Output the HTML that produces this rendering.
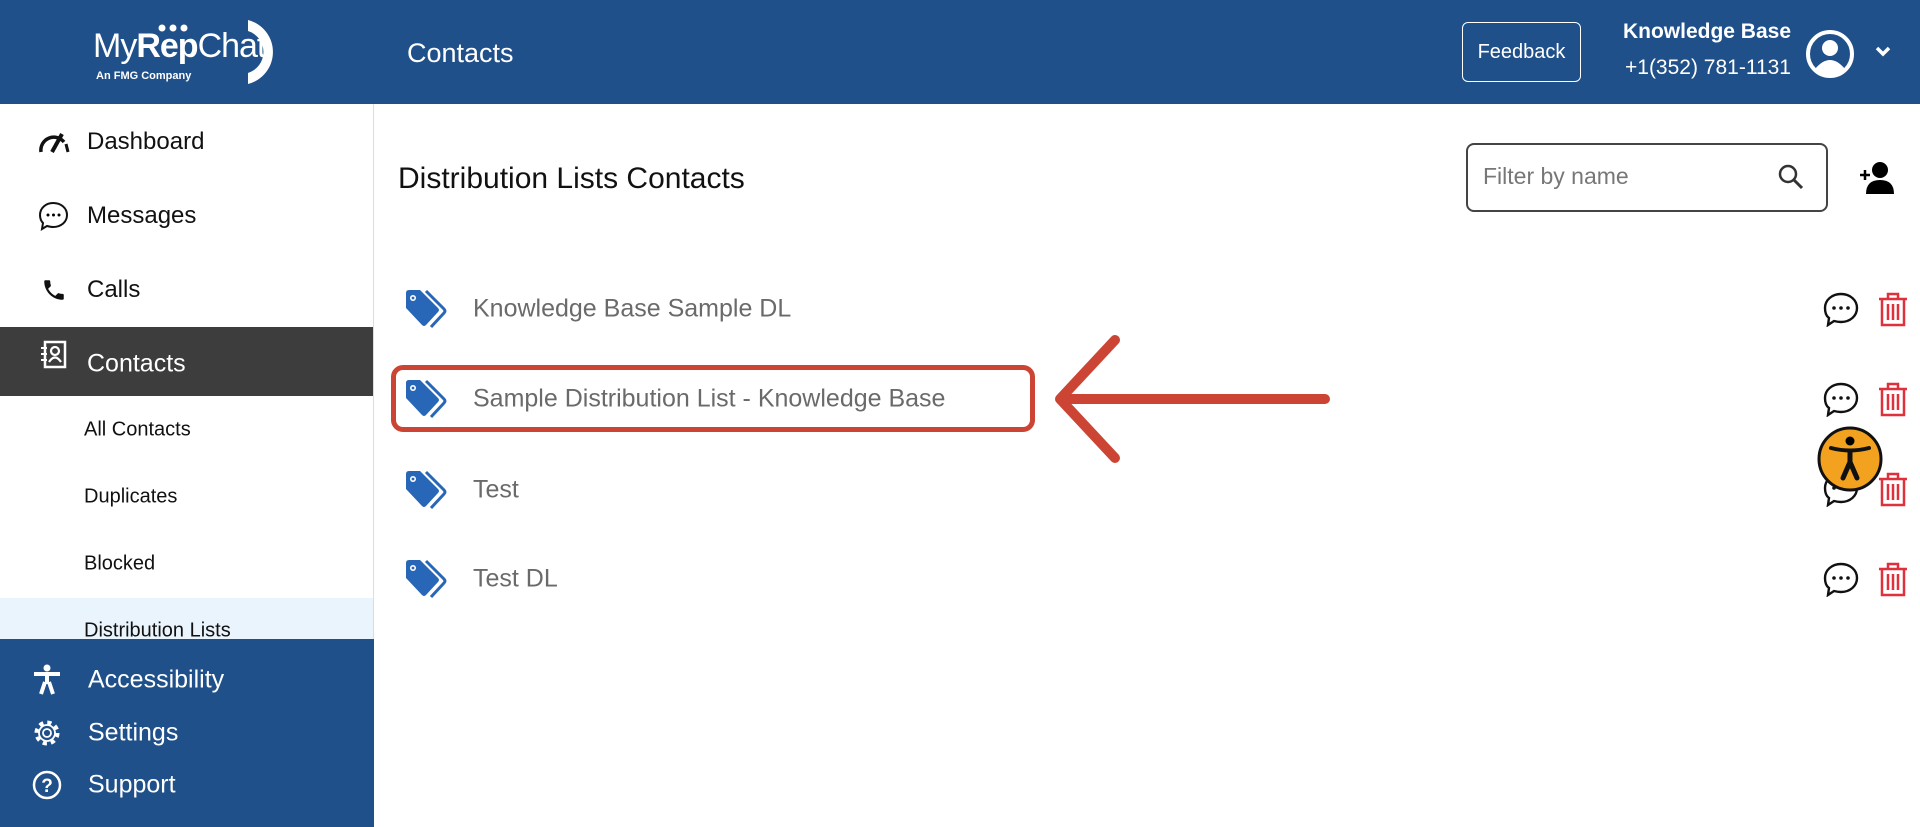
<!DOCTYPE html>
<html><head><meta charset="utf-8"><style>
*{margin:0;padding:0;box-sizing:border-box}
body{width:1920px;height:827px;position:relative;overflow:hidden;background:#fff;font-family:"Liberation Sans",sans-serif;color:#000}
.abs{position:absolute}
.hdr{left:0;top:0;width:1920px;height:104px;background:#20508a}
.side{left:0;top:104px;width:374px;height:723px;background:#fff;border-right:1px solid #ddd}
.nav{position:absolute;left:87px;font-size:24px;color:#111;transform:translateY(-50%)}
.sub{position:absolute;left:84px;font-size:20px;color:#111;transform:translateY(-50%)}
.bnav{position:absolute;left:88px;font-size:25px;color:#fff;transform:translateY(-50%)}
.row{position:absolute;left:473px;font-size:25px;color:#6a6a6a;transform:translateY(-50%)}
</style></head><body>
<div class="abs hdr"></div>
<div class="abs" style="left:93px;top:27px;color:#fff;font-size:34px;letter-spacing:-1px">My<b>Rep</b>Chat</div>
<div class="abs" style="left:96px;top:70px;color:#fff;font-size:11px;font-weight:bold">An FMG Company</div>
<svg class="abs" style="left:155px;top:20px" width="130" height="68"><circle cx="7" cy="8" r="3.5" fill="#fff"/><circle cx="18" cy="8" r="3.5" fill="#fff"/><circle cx="29" cy="8" r="3.5" fill="#fff"/><path d="M93 0 A33 33 0 0 1 93 64 L93 53 A22 22 0 0 0 93 11 Z" fill="#fff"/></svg>
<div class="abs" style="left:407px;top:38px;color:#fff;font-size:27px">Contacts</div>
<div class="abs" style="left:1462px;top:22px;width:119px;height:60px;border:1px solid #fff;border-radius:6px;color:#fff;font-size:20px;text-align:center;line-height:58px">Feedback</div>
<div class="abs" style="right:129px;top:20px;color:#fff;font-size:21px;font-weight:bold;text-align:right">Knowledge Base</div>
<div class="abs" style="right:129px;top:56px;color:#fff;font-size:21px;text-align:right">+1(352) 781-1131</div>
<svg class="abs" style="left:1805px;top:29px" width="50" height="50"><circle cx="25" cy="25" r="22" fill="none" stroke="#fff" stroke-width="4"/><circle cx="25" cy="19" r="8" fill="#fff"/><path d="M10 40 Q25 22 40 40 A22 22 0 0 1 10 40Z" fill="#fff"/></svg>
<svg class="abs" style="left:1875px;top:46px" width="16" height="12"><path d="M2 2 L8 8 L14 2" stroke="#fff" stroke-width="3.5" fill="none"/></svg>

<div class="abs side"></div>
<svg class="abs" style="left:38px;top:130px" width="32" height="24"><path d="M3 22 A13 13 0 0 1 26 12" stroke="#111" stroke-width="3.5" fill="none"/><path d="M14 22 L24 4" stroke="#111" stroke-width="4"/><path d="M28 14 L30 22" stroke="#111" stroke-width="3"/></svg>
<div class="nav" style="top:142px">Dashboard</div>
<svg class="abs" style="left:38px;top:200px" width="32" height="32"><path d="M15 3 C23 3 29 8 29 15 C29 22 23 27 15 27 C13 27 11 26.5 9 26 L4 29 L5 23 C3 21 2 18 2 15 C2 8 8 3 15 3Z" fill="none" stroke="#111" stroke-width="2"/><circle cx="10" cy="15" r="1.5"/><circle cx="15.5" cy="15" r="1.5"/><circle cx="21" cy="15" r="1.5"/></svg>
<div class="nav" style="top:216px">Messages</div>
<svg class="abs" style="left:41px;top:277px" width="26" height="26" viewBox="0 0 24 24"><path d="M6.6 10.8c1.4 2.8 3.8 5.1 6.6 6.6l2.2-2.2c.3-.3.7-.4 1-.2 1.1.4 2.3.6 3.6.6.6 0 1 .4 1 1V20c0 .6-.4 1-1 1C10.6 21 3 13.4 3 4c0-.6.4-1 1-1h3.5c.6 0 1 .4 1 1 0 1.3.2 2.5.6 3.6.1.3 0 .7-.2 1z" fill="#111"/></svg>
<div class="nav" style="top:290px">Calls</div>
<div class="abs" style="left:0;top:327px;width:373px;height:69px;background:#3d3d3d"></div>
<svg class="abs" style="left:39px;top:340px" width="30" height="30"><rect x="6" y="2" width="20" height="25" fill="none" stroke="#fff" stroke-width="2.5"/><circle cx="16" cy="11" r="4" fill="none" stroke="#fff" stroke-width="2.2"/><path d="M10 22 Q16 13 22 22" fill="none" stroke="#fff" stroke-width="2.2"/><path d="M2 8h6M2 14h6M2 20h6" stroke="#fff" stroke-width="2"/></svg>
<div class="nav" style="top:364px;color:#fff;font-size:25px">Contacts</div>
<div class="sub" style="top:430px">All Contacts</div>
<div class="sub" style="top:497px">Duplicates</div>
<div class="sub" style="top:564px">Blocked</div>
<div class="abs" style="left:0;top:598px;width:373px;height:41px;background:#eaf4fd"></div>
<div class="sub" style="top:631px">Distribution Lists</div>
<div class="abs" style="left:0;top:639px;width:374px;height:188px;background:#20508a"></div>
<svg class="abs" style="left:32px;top:664px" width="30" height="32"><circle cx="15" cy="4" r="3.5" fill="#fff"/><path d="M2 10h26M15 10v10M9 30l4-12M21 30l-4-12" stroke="#fff" stroke-width="4"/></svg>
<div class="bnav" style="top:680px">Accessibility</div>
<svg class="abs" style="left:32px;top:718px" width="30" height="30"><circle cx="15" cy="15" r="10" fill="none" stroke="#fff" stroke-width="5" stroke-dasharray="4 3.85"/><circle cx="15" cy="15" r="8" fill="#20508a" stroke="#fff" stroke-width="1.8"/><circle cx="15" cy="15" r="4" fill="none" stroke="#fff" stroke-width="1.8"/></svg>
<div class="bnav" style="top:733px">Settings</div>
<svg class="abs" style="left:32px;top:770px" width="30" height="30"><circle cx="15" cy="15" r="13" fill="none" stroke="#fff" stroke-width="2.5"/><text x="15" y="22" font-size="19" font-weight="bold" fill="#fff" text-anchor="middle" font-family="Liberation Sans">?</text></svg>
<div class="bnav" style="top:785px">Support</div>

<div class="abs" style="left:398px;top:162px;font-size:30px;color:#111">Distribution Lists Contacts</div>
<div class="abs" style="left:1466px;top:143px;width:362px;height:69px;border:2px solid #444;border-radius:8px"></div>
<div class="abs" style="left:1483px;top:163px;font-size:23px;color:#777">Filter by name</div>
<svg class="abs" style="left:1777px;top:163px" width="28" height="28"><circle cx="11" cy="11" r="8" fill="none" stroke="#333" stroke-width="2.5"/><path d="M17 17l8 8" stroke="#333" stroke-width="3"/></svg>
<svg class="abs" style="left:1858px;top:158px" width="40" height="40"><circle cx="22" cy="12" r="8"/><path d="M8 36 Q8 22 22 22 Q36 22 36 36Z"/><path d="M2 17h10M7 12v10" stroke="#000" stroke-width="2.5"/></svg>

<svg width="0" height="0" style="position:absolute"><defs><g id="tag"><path d="M2 4 Q2 1 5 1 L16 1 L34 19 Q36 21 34 23 L22 36 Q20 38 18 36 L2 19Z" fill="#2867b8"/><path d="M22 2 L40 20 Q42 22 40 24 L27 38" stroke="#2867b8" stroke-width="3" fill="none"/><circle cx="9" cy="9" r="3" fill="#fff"/><circle cx="9" cy="9" r="1.4" fill="#2867b8"/></g>
<g id="chat"><path d="M19 3 C28 3 35 9 35 17 C35 25 28 31 19 31 C17 31 14 30.5 12 30 L6 34 L7 27 C4 25 3 21 3 17 C3 9 10 3 19 3Z" fill="none" stroke="#111" stroke-width="2.4"/><circle cx="12" cy="17" r="1.8" fill="#111"/><circle cx="19" cy="17" r="1.8" fill="#111"/><circle cx="26" cy="17" r="1.8" fill="#111"/></g>
<g id="trash"><path d="M3 8h28M12 8V3h10v5M6 8v26h22V8M12 13v16M17 13v16M22 13v16" stroke="#e0303c" stroke-width="2.5" fill="none"/></g></defs></svg>
<svg class="abs" style="left:404px;top:289px" width="44" height="40"><use href="#tag"/></svg>
<div class="row" style="top:309px">Knowledge Base Sample DL</div>
<svg class="abs" style="left:404px;top:379px" width="44" height="40"><use href="#tag"/></svg>
<div class="row" style="top:399px">Sample Distribution List - Knowledge Base</div>
<svg class="abs" style="left:404px;top:470px" width="44" height="40"><use href="#tag"/></svg>
<div class="row" style="top:490px">Test</div>
<svg class="abs" style="left:404px;top:559px" width="44" height="40"><use href="#tag"/></svg>
<div class="row" style="top:579px">Test DL</div>
<div class="abs" style="left:391px;top:365px;width:644px;height:67px;border:5px solid #cc4433;border-radius:12px"></div>
<svg class="abs" style="left:1040px;top:330px" width="300" height="140"><path d="M20 69 H285 M75 10 L20 69 L75 128" stroke="#cc4433" stroke-width="10" stroke-linecap="round" stroke-linejoin="round" fill="none"/></svg>

<svg class="abs" style="left:1822px;top:291px" width="38" height="36"><use href="#chat"/></svg>
<svg class="abs" style="left:1876px;top:291px" width="34" height="36"><use href="#trash"/></svg>
<svg class="abs" style="left:1822px;top:381px" width="38" height="36"><use href="#chat"/></svg>
<svg class="abs" style="left:1876px;top:381px" width="34" height="36"><use href="#trash"/></svg>
<svg class="abs" style="left:1822px;top:471px" width="38" height="36"><use href="#chat"/></svg>
<svg class="abs" style="left:1876px;top:471px" width="34" height="36"><use href="#trash"/></svg>
<svg class="abs" style="left:1822px;top:561px" width="38" height="36"><use href="#chat"/></svg>
<svg class="abs" style="left:1876px;top:561px" width="34" height="36"><use href="#trash"/></svg>
<svg class="abs" style="left:1817px;top:426px" width="66" height="66"><circle cx="33" cy="33" r="31" fill="#f2a21e" stroke="#111" stroke-width="3"/><circle cx="33" cy="15" r="4.5"/><path d="M14 22 Q33 27 52 22" stroke="#111" stroke-width="4" fill="none" stroke-linecap="round"/><path d="M33 25 V37 M33 36 L26 52 M33 36 L40 52" stroke="#111" stroke-width="5" stroke-linecap="round" fill="none"/></svg>
</body></html>
